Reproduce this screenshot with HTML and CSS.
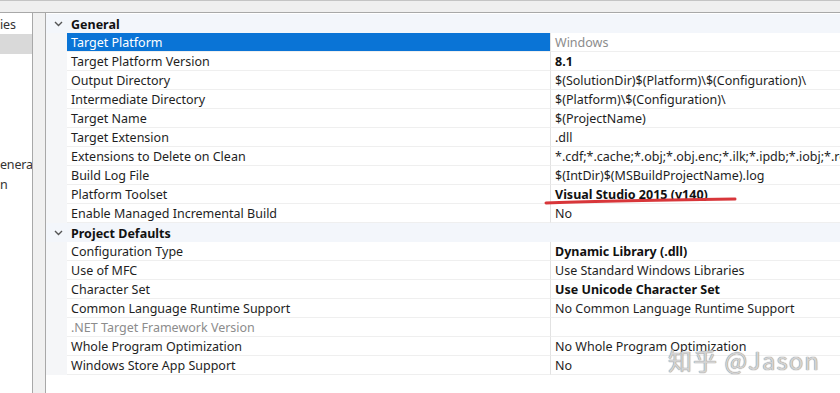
FILE: index.html
```html
<!DOCTYPE html>
<html lang="en">
<head>
    <meta charset="UTF-8">
    <title>Property Pages</title>
    <link rel="stylesheet" href="styles.css">
</head>
<body>
    <div class="top-bar"></div>
    <div class="main">
        <div class="tree">
            <div class="tree-item">ies</div>
            <div class="tree-item selected"></div>
            <div class="tree-item"></div>
            <div class="tree-item"></div>
            <div class="tree-item"></div>
            <div class="tree-item"></div>
            <div class="tree-item"></div>
            <div class="tree-item">enerat</div>
            <div class="tree-item">n</div>
        </div>
        <div class="gap"></div>
        <div class="grid">
            <div class="section">
                <span class="chevron"><svg width="9" height="6" viewBox="0 0 9 6"><polyline points="1,1 4.5,4.5 8,1" fill="none" stroke="#555" stroke-width="1.4"/></svg></span>
                <span class="section-title">General</span>
            </div>
            <div class="row">
                <div class="gutter"></div>
                <div class="name active">Target Platform</div>
                <div class="value dim">Windows</div>
            </div>
            <div class="row">
                <div class="gutter"></div>
                <div class="name">Target Platform Version</div>
                <div class="value bold">8.1</div>
            </div>
            <div class="row">
                <div class="gutter"></div>
                <div class="name">Output Directory</div>
                <div class="value">$(SolutionDir)$(Platform)\$(Configuration)\</div>
            </div>
            <div class="row">
                <div class="gutter"></div>
                <div class="name">Intermediate Directory</div>
                <div class="value">$(Platform)\$(Configuration)\</div>
            </div>
            <div class="row">
                <div class="gutter"></div>
                <div class="name">Target Name</div>
                <div class="value">$(ProjectName)</div>
            </div>
            <div class="row">
                <div class="gutter"></div>
                <div class="name">Target Extension</div>
                <div class="value">.dll</div>
            </div>
            <div class="row">
                <div class="gutter"></div>
                <div class="name">Extensions to Delete on Clean</div>
                <div class="value">*.cdf;*.cache;*.obj;*.obj.enc;*.ilk;*.ipdb;*.iobj;*.resources;*.tlb;*.tli;*.tlh;*.tmp;*.rsp</div>
            </div>
            <div class="row">
                <div class="gutter"></div>
                <div class="name">Build Log File</div>
                <div class="value">$(IntDir)$(MSBuildProjectName).log</div>
            </div>
            <div class="row">
                <div class="gutter"></div>
                <div class="name">Platform Toolset</div>
                <div class="value bold">Visual Studio 2015 (v140)</div>
            </div>
            <div class="row">
                <div class="gutter"></div>
                <div class="name">Enable Managed Incremental Build</div>
                <div class="value">No</div>
            </div>
            <div class="section">
                <span class="chevron"><svg width="9" height="6" viewBox="0 0 9 6"><polyline points="1,1 4.5,4.5 8,1" fill="none" stroke="#555" stroke-width="1.4"/></svg></span>
                <span class="section-title">Project Defaults</span>
            </div>
            <div class="row">
                <div class="gutter"></div>
                <div class="name">Configuration Type</div>
                <div class="value bold">Dynamic Library (.dll)</div>
            </div>
            <div class="row">
                <div class="gutter"></div>
                <div class="name">Use of MFC</div>
                <div class="value">Use Standard Windows Libraries</div>
            </div>
            <div class="row">
                <div class="gutter"></div>
                <div class="name">Character Set</div>
                <div class="value bold">Use Unicode Character Set</div>
            </div>
            <div class="row">
                <div class="gutter"></div>
                <div class="name">Common Language Runtime Support</div>
                <div class="value">No Common Language Runtime Support</div>
            </div>
            <div class="row">
                <div class="gutter"></div>
                <div class="name dim">.NET Target Framework Version</div>
                <div class="value"></div>
            </div>
            <div class="row">
                <div class="gutter"></div>
                <div class="name">Whole Program Optimization</div>
                <div class="value">No Whole Program Optimization</div>
            </div>
            <div class="row">
                <div class="gutter"></div>
                <div class="name">Windows Store App Support</div>
                <div class="value">No</div>
            </div>
        </div>
    </div>

    <svg class="underline" width="200" height="12" viewBox="0 0 200 12">
        <path d="M3,8 C50,6 120,5 192,4" fill="none" stroke="#d8363a" stroke-width="3" stroke-linecap="round"/>
    </svg>
    <div class="watermark">知乎 @Jason</div>
</body>
</html>
```

FILE: styles.css
```css
body {
    margin: 0;
    background-color: #ffffff;
    font-family: "Noto Sans", "Open Sans", sans-serif;
    font-size: 12.5px;
    color: #1e1e1e;
    overflow: hidden;
}
.top-bar {
    height: 11px;
    background-color: #efefef;
    border-top: 1px solid #c4c4c4;
    border-bottom: 1px solid #a8a8a8;
}
.main {
    display: flex;
    height: 380px;
}
.tree {
    width: 32px;
    border-right: 1px solid #a8a8a8;
    padding-top: 1px;
    overflow: hidden;
    background-color: #ffffff;
}
.tree-item {
    height: 20px;
    line-height: 21px;
    white-space: nowrap;
    color: #333;
    letter-spacing: -0.2px;
}
.tree-item.selected {
    background-color: #d9d9d9;
}
.gap {
    width: 12px;
    background-color: #f0f0f0;
}
.grid {
    flex: 1;
    border-left: 1px solid #a8a8a8;
    padding-top: 1px;
    overflow: hidden;
}
.section {
    display: flex;
    align-items: center;
    height: 19px;
    padding-top: 1px;
    box-sizing: border-box;
    background-color: #f3f6fb;
}
.chevron {
    width: 25px;
    padding-left: 8px;
    box-sizing: border-box;
    display: flex;
    align-items: center;
}
.section-title {
    font-weight: bold;
    color: #111;
}
.row {
    display: grid;
    grid-template-columns: 21px 483px 1fr;
    height: 19px;
}
.gutter {
    background-color: #f5f6f8;
}
.name, .value {
    line-height: 20px;
    height: 18px;
    border-bottom: 1px solid #efefef;
    white-space: nowrap;
    overflow: hidden;
}
.name {
    padding-left: 4px;
}
.name.active {
    background-color: #0a74d6;
    color: #ffffff;
}
.value {
    padding-left: 4px;
    border-left: 1px solid #e2e2e2;
}
.dim {
    color: #8c8c8c;
}
.bold {
    font-weight: bold;
    color: #111;
}
.underline {
    position: absolute;
    left: 543px;
    top: 195px;
}
.watermark {
    position: absolute;
    left: 668px;
    top: 342px;
    font-family: "Noto Sans CJK SC", sans-serif;
    font-size: 24px;
    color: rgba(225, 225, 225, 0.85);
    text-shadow: 0 0 1px #8a8a8a, 0 0 1px #8a8a8a;
    letter-spacing: 1px;
}
```
